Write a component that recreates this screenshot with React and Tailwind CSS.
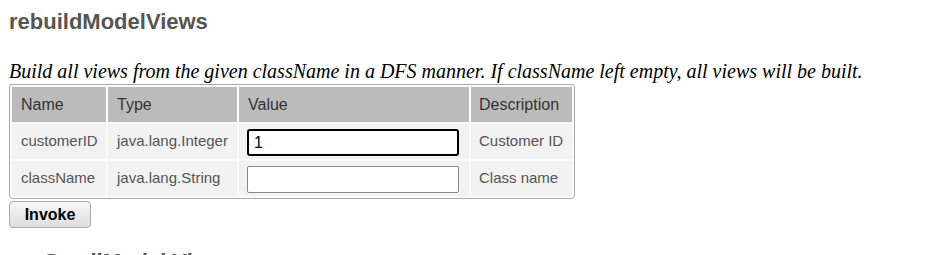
import { useState } from "react";

const params = [
  { name: "customerID", type: "java.lang.Integer", value: "1", desc: "Customer ID", focused: true },
  { name: "className", type: "java.lang.String", value: "", desc: "Class name" },
];

export default function App() {
  const [values, setValues] = useState(params.map((p) => p.value));

  return (
    <div className="bg-white w-[927px] h-[255px] overflow-hidden font-['Liberation_Sans',Arial,sans-serif]">
      <div className="px-[9px] pt-[9px]">
        <h2 className="text-[22px] font-bold text-[#555] leading-[26px]">rebuildModelViews</h2>

        <p className="mt-[25px] font-['Liberation_Serif','Times_New_Roman',serif] italic text-[20px] leading-[23px] text-black whitespace-nowrap">
          Build all views from the given className in a DFS manner. If className left empty, all views will be built.
        </p>

        <div className="mt-[1px] w-[566px] border border-[#aaa] rounded-[3px] bg-[#fafafa]">
          <table className="w-[564px] table-fixed border-separate border-spacing-[2px] whitespace-nowrap">
            <thead>
              <tr className="text-[#333] text-[16px]">
                <th className="bg-[#bbb] font-normal text-left px-[9px] h-[35px] w-[94px]">Name</th>
                <th className="bg-[#bbb] font-normal text-left px-[9px] w-[129px]">Type</th>
                <th className="bg-[#bbb] font-normal text-left px-[9px] w-[230px]">Value</th>
                <th className="bg-[#bbb] font-normal text-left px-[8px] w-[101px]">Description</th>
              </tr>
            </thead>
            <tbody>
              {params.map((p, i) => (
                <tr key={p.name} className="text-[#555] text-[15px]">
                  <td className="bg-[#f2f2f2] px-[9px] h-[35px] align-top pt-[6px]">{p.name}</td>
                  <td className="bg-[#f2f2f2] px-[9px] align-top pt-[6px]">{p.type}</td>
                  <td className="bg-[#f2f2f2] px-[8px] align-top pt-[5px]">
                    <input
                      value={values[i]}
                      onChange={(e) => setValues((v) => v.map((x, j) => (j === i ? e.target.value : x)))}
                      className={
                        p.focused
                          ? "w-[212px] h-[27px] border-2 border-black rounded-[3px] bg-white px-[5px] text-[16px] text-black outline-none"
                          : "w-[212px] h-[27px] border border-[#888] rounded-[2px] bg-white px-[6px] text-[16px] text-black outline-none"
                      }
                    />
                  </td>
                  <td className="bg-[#f2f2f2] px-[8px] align-top pt-[6px]">{p.desc}</td>
                </tr>
              ))}
            </tbody>
          </table>
        </div>

        <button className="mt-[2px] w-[82px] h-[27px] border border-[#aaa] rounded-[4px] bg-gradient-to-b from-[#f6f6f6] to-[#dedede] text-[16px] font-bold text-black">
          Invoke
        </button>

        <h2 className="mt-[21px] ml-[35px] text-[22px] font-bold text-[#555] leading-[26px] whitespace-nowrap">
          SmallModel Views
        </h2>
      </div>
    </div>
  );
}
